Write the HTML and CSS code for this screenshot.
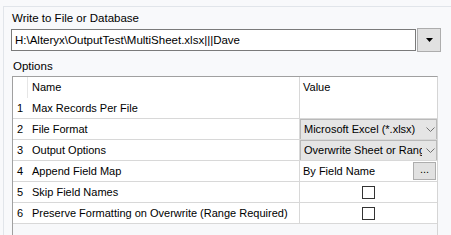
FILE: index.html
```html
<!DOCTYPE html>
<html lang="en">
<head>
    <meta charset="UTF-8">
    <title>Write to File or Database</title>
<link rel="stylesheet" href="styles.css">
</head>
<body>
    <div class="panel">
        <div class="title">Write to File or Database</div>
        <div class="path-row">
            <div class="path-input">H:\Alteryx\OutputTest\MultiSheet.xlsx|||Dave</div>
            <button class="drop-btn">
                <svg width="7" height="4" viewBox="0 0 7 4"><polygon points="0,0 7,0 3.5,4" fill="#000"/></svg>
            </button>
        </div>

        <div class="options-label">Options</div>
        <div class="grid">
            <div class="row head">
                <div class="num"></div>
                <div class="name">Name</div>
                <div class="value">Value</div>
            </div>
            <div class="row first">
                <div class="num">1</div>
                <div class="name">Max Records Per File</div>
                <div class="value"></div>
            </div>
            <div class="row">
                <div class="num">2</div>
                <div class="name">File Format</div>
                <div class="value">
                    <div class="combo">
                        <span>Microsoft Excel (*.xlsx)</span>
                        <svg width="9" height="5" viewBox="0 0 9 5"><polyline points="0.5,0.5 4.5,4.5 8.5,0.5" fill="none" stroke="#707070"/></svg>
                    </div>
                </div>
            </div>
            <div class="row">
                <div class="num">3</div>
                <div class="name">Output Options</div>
                <div class="value">
                    <div class="combo">
                        <span>Overwrite Sheet or Range</span>
                        <svg width="9" height="5" viewBox="0 0 9 5"><polyline points="0.5,0.5 4.5,4.5 8.5,0.5" fill="none" stroke="#707070"/></svg>
                    </div>
                </div>
            </div>
            <div class="row">
                <div class="num">4</div>
                <div class="name">Append Field Map</div>
                <div class="value split">
                    <span class="text">By Field Name</span>
                    <button class="dots">...</button>
                </div>
            </div>
            <div class="row">
                <div class="num">5</div>
                <div class="name">Skip Field Names</div>
                <div class="value center"><span class="check"></span></div>
            </div>
            <div class="row">
                <div class="num">6</div>
                <div class="name">Preserve Formatting on Overwrite (Range Required)</div>
                <div class="value center"><span class="check"></span></div>
            </div>
        </div>
    </div>
</body>
</html>
```

FILE: styles.css
```css
body{
    margin: 0;
    background: #f8f9fb;
    font-family: "Liberation Sans", Arial, sans-serif;
    font-size: 11px;
    color: #000;
    height: 235px;
    overflow: hidden;
}

.panel{
    margin: 6px 0 0 3px;
    border-top: 1px solid #e1e5ea;
    border-left: 1px solid #e1e5ea;
    padding: 3px 0 0 7px;
    height: 225px;
}

.title{
    line-height: 16px;
    padding-left: 1px;
    font-size: 11.5px;
}

.path-row{
    display: flex;
    align-items: center;
    gap: 1px;
    margin-top: 2px;
}

.path-input{
    width: 400px;
    height: 20px;
    line-height: 20px;
    padding-left: 3px;
    border: 1px solid #7a7a7a;
    background: #fff;
    white-space: nowrap;
    font-size: 11.5px;
}

.drop-btn{
    width: 24px;
    height: 24px;
    padding: 0;
    border: 1px solid #adadad;
    background: #e1e1e1;
    display: flex;
    align-items: center;
    justify-content: center;
}

.options-label{
    line-height: 16px;
    margin-top: 6px;
    padding-left: 2px;
    font-size: 11.5px;
}

.grid{
    margin: 2px 0 0 1px;
    width: 424px;
    height: 158px;
    border-top: 1px solid #a0a0a0;
    border-left: 1px solid #a0a0a0;
    border-right: 1px solid #d5d5d5;
    background: #f7f8fa;
}

.row{
    display: grid;
    grid-template-columns: 15px 272px 137px;
    height: 20px;
    line-height: 20px;
    background: #fff;
    border-bottom: 1px solid #d8d8d8;
}

.row.head{
    height: 21px;
    line-height: 21px;
    border-bottom: none;
}

.row.head .num{
    border-right: 1px solid #e6e6e6;
}

.num{
    padding-left: 4px;
}

.name{
    padding-left: 4px;
    border-right: 1px solid #d8d8d8;
    white-space: nowrap;
    overflow: hidden;
}

.value{
    padding-left: 3px;
    white-space: nowrap;
    overflow: hidden;
}

.combo{
    margin-left: -3px;
    height: 19px;
    line-height: 19px;
    border: 1px solid #b9b9b9;
    border-bottom: none;
    background: #e5e5e5;
    display: flex;
    align-items: center;
    padding-left: 3px;
}

.combo span{
    width: 118px;
    overflow: hidden;
    white-space: nowrap;
}

.combo svg{
    margin-left: 4px;
}

.split{
    display: flex;
    align-items: center;
}

.split .text{
    width: 110px;
}

.dots{
    width: 23px;
    height: 18px;
    padding: 0 0 4px 0;
    border: 1px solid #adadad;
    background: #e1e1e1;
    font-family: "Liberation Sans", Arial, sans-serif;
    font-size: 11px;
    line-height: 12px;
    color: #000;
}

.center{
    display: flex;
    align-items: center;
    justify-content: center;
    padding-left: 0;
}

.check{
    width: 11px;
    height: 11px;
    border: 1px solid #333;
    background: #fff;
}
```
